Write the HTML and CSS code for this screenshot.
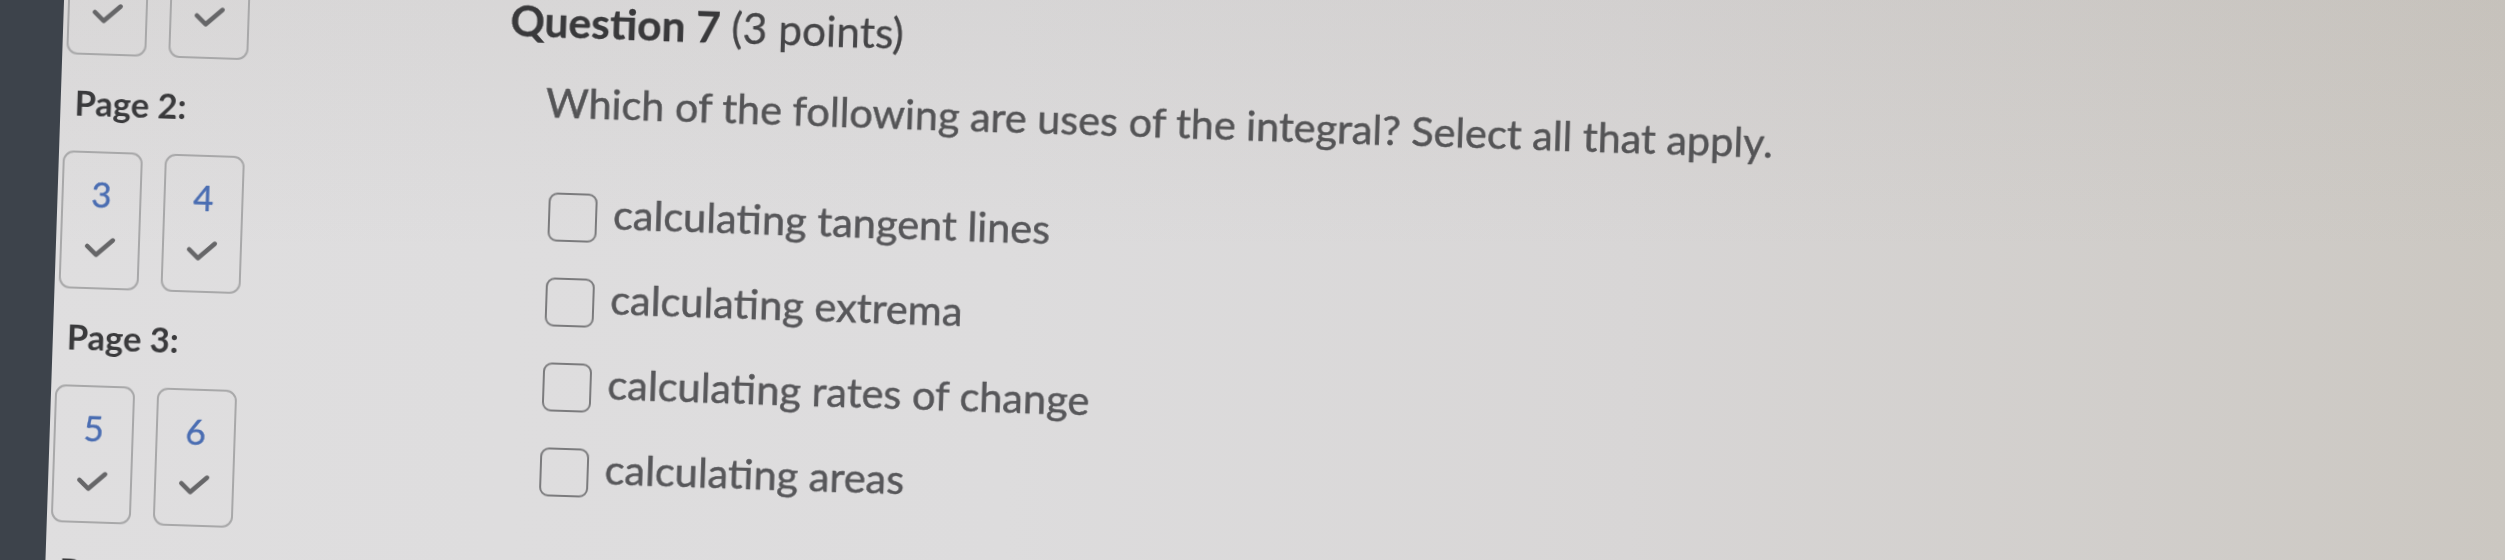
FILE: index.html
```html
<!DOCTYPE html>
<html lang="en">
<head>
<meta charset="utf-8">
<title>Question 7</title>
<link rel="stylesheet" href="styles.css">
</head>
<body>
<div class="scene">
  <aside class="rail"></aside>
  <nav class="nav">
    <div class="q-row">
      <div class="q-box"><span class="q-num">1</span><svg class="q-check" viewBox="0 0 30 20"><polyline points="3,9 11.5,17 27,3"/></svg></div>
      <div class="q-box"><span class="q-num">2</span><svg class="q-check" viewBox="0 0 30 20"><polyline points="3,9 11.5,17 27,3"/></svg></div>
    </div>
    <h3 class="page-label">Page 2:</h3>
    <div class="q-row">
      <div class="q-box"><span class="q-num">3</span><svg class="q-check" viewBox="0 0 30 20"><polyline points="3,9 11.5,17 27,3"/></svg></div>
      <div class="q-box"><span class="q-num">4</span><svg class="q-check" viewBox="0 0 30 20"><polyline points="3,9 11.5,17 27,3"/></svg></div>
    </div>
    <h3 class="page-label">Page 3:</h3>
    <div class="q-row">
      <div class="q-box"><span class="q-num">5</span><svg class="q-check" viewBox="0 0 30 20"><polyline points="3,9 11.5,17 27,3"/></svg></div>
      <div class="q-box"><span class="q-num">6</span><svg class="q-check" viewBox="0 0 30 20"><polyline points="3,9 11.5,17 27,3"/></svg></div>
    </div>
    <h3 class="page-label">Page 4:</h3>
  </nav>
  <main class="question">
    <h2 class="q-title"><strong>Question 7</strong> (3 points)</h2>
    <p class="q-text">Which of the following are uses of the integral? Select all that apply.</p>
    <ul class="options">
      <li class="option"><span class="box"></span><span class="label">calculating tangent lines</span></li>
      <li class="option"><span class="box"></span><span class="label">calculating extrema</span></li>
      <li class="option"><span class="box"></span><span class="label">calculating rates of change</span></li>
      <li class="option"><span class="box"></span><span class="label">calculating areas</span></li>
    </ul>
  </main>
</div>
</body>
</html>
```
FILE: styles.css
```css
html, body {
  margin: 0;
  height: 100%;
  overflow: hidden;
}

body {
  font-family: Lato, "Open Sans", "Liberation Sans", sans-serif;
  background:
    linear-gradient(180deg, rgba(120, 110, 100, 0.06) 0%, rgba(120, 110, 100, 0) 45%),
    linear-gradient(90deg, #dfdedf 0%, #dddcdd 40%, #d8d6d6 65%, #d1cecb 85%, #cbc7c1 100%);
}

.scene {
  display: flex;
  width: 2700px;
  height: 800px;
  margin: -100px 0 0 -100px;
  transform-origin: 100px 100px;
  transform: rotate(1.9deg);
  filter: blur(0.5px);
}

.rail {
  flex: none;
  width: 164px;
  background: #3d434b;
}

.nav {
  flex: none;
  box-sizing: border-box;
  width: 447px;
  padding: 14px 0 0 4px;
}

.q-row {
  display: flex;
  gap: 22px;
}

.q-box {
  box-sizing: border-box;
  width: 80px;
  height: 138px;
  border: 2px solid #a8a8a9;
  border-radius: 11px;
  display: flex;
  flex-direction: column;
  align-items: center;
}

.q-num {
  margin-top: 20px;
  font-size: 35px;
  line-height: 40px;
  color: #4a6db2;
  -webkit-text-stroke: 0.4px #4a6db2;
}

.q-check {
  margin-top: 23px;
  width: 32px;
  height: 22px;
  fill: none;
  stroke: #666668;
  stroke-width: 4.2;
  stroke-linecap: round;
  stroke-linejoin: round;
}

.page-label {
  margin: 28px 0 28px 10px;
  font-size: 34.5px;
  line-height: 40px;
  font-weight: 700;
  color: #3a3a3c;
}

.question {
  flex: none;
  padding-top: 77px;
}

.q-title {
  margin: 0;
  font-size: 42.5px;
  line-height: 52px;
  font-weight: 400;
  color: #454547;
  -webkit-text-stroke: 0.3px #454547;
}

.q-title strong {
  font-weight: 700;
  color: #39393b;
  -webkit-text-stroke: 0.3px #39393b;
}

.q-text {
  margin: 29px 0 0 38px;
  font-size: 41.4px;
  line-height: 50px;
  color: #545456;
  -webkit-text-stroke: 0.5px #545456;
}

.options {
  list-style: none;
  margin: 48px 0 0 44px;
  padding: 0;
}

.option {
  display: flex;
  align-items: center;
  height: 85px;
}

.box {
  flex: none;
  box-sizing: border-box;
  width: 49px;
  height: 49px;
  border: 2.5px solid #7b7b7d;
  border-radius: 9px;
}

.label {
  margin: 0 0 11px 16px;
  font-size: 41.5px;
  line-height: 50px;
  color: #57575a;
  -webkit-text-stroke: 0.5px #57575a;
}
```
